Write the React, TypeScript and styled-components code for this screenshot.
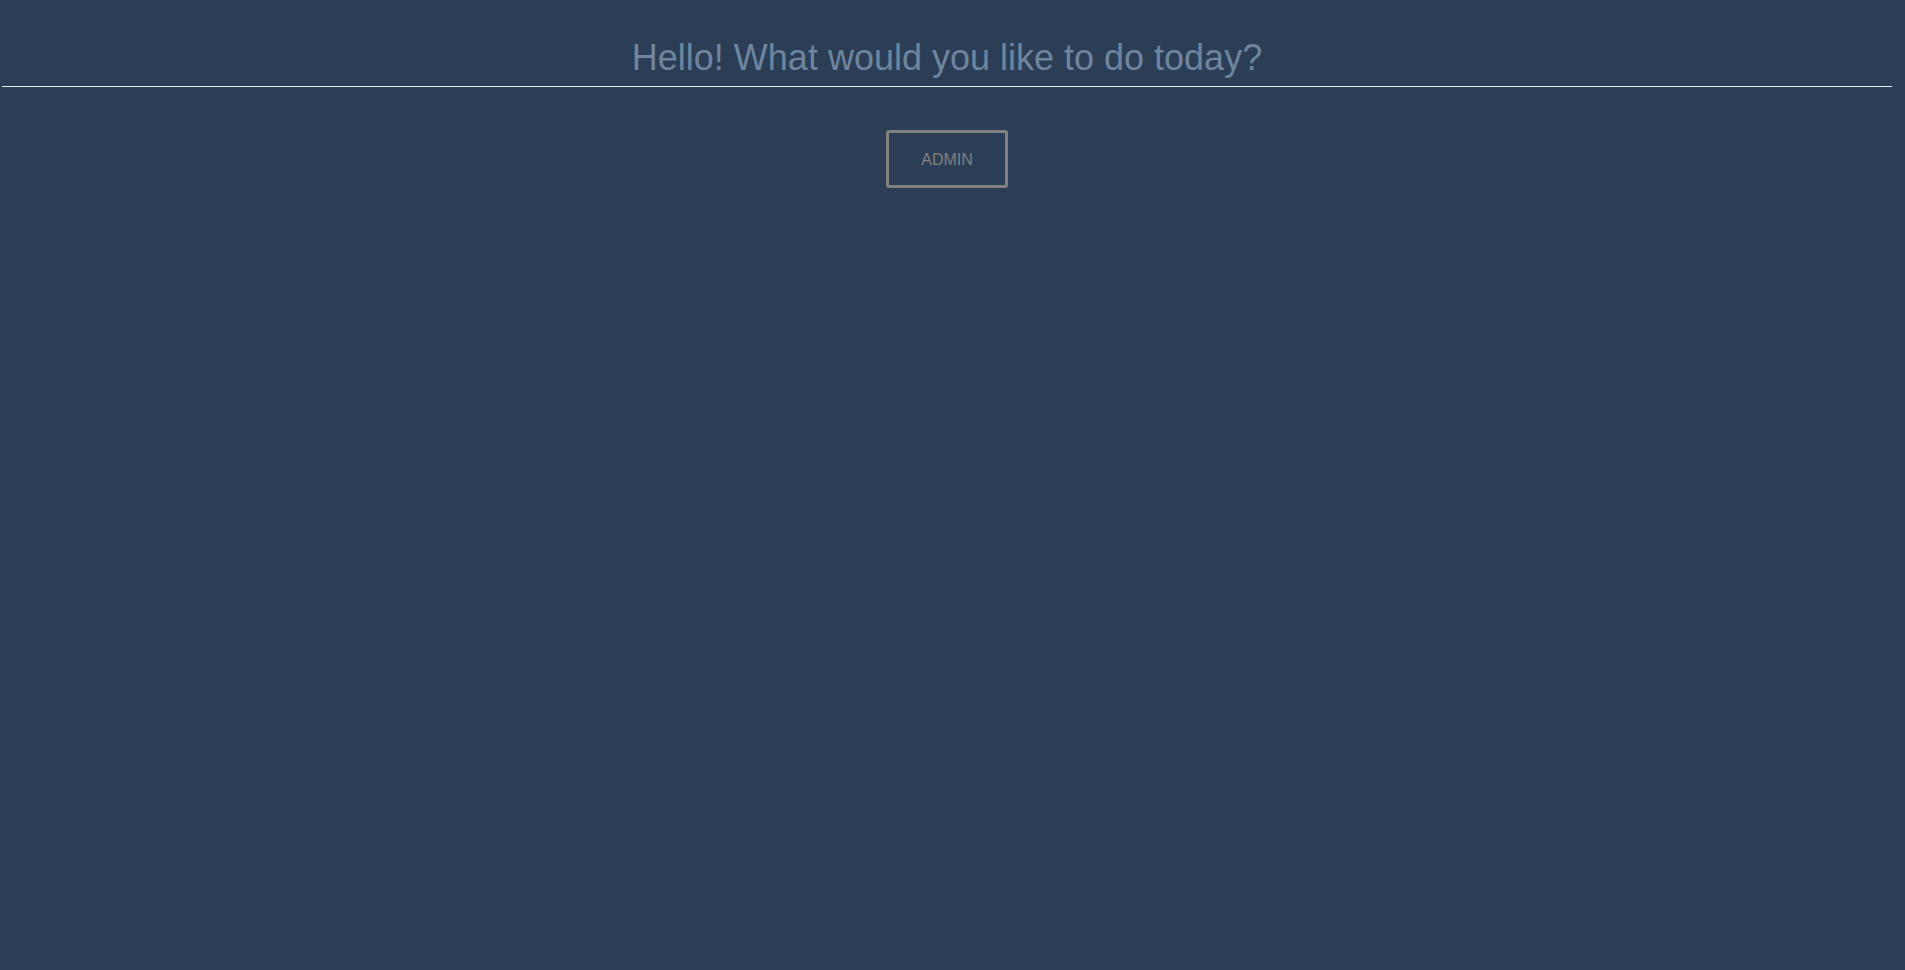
import styled, { createGlobalStyle } from "styled-components";

const GlobalStyle = createGlobalStyle`
  html, body {
    margin: 0;
    padding: 0;
    background: #2b3e55;
  }
  body {
    font-family: "Liberation Sans", Arial, sans-serif;
  }
`;

export default function App() {
  return (
    <>
      <GlobalStyle />
      <Page>
        <Header>
          <h1>Hello! What would you like to do today?</h1>
        </Header>
        <Actions>
          <MenuButton type="button">ADMIN</MenuButton>
        </Actions>
      </Page>
    </>
  );
}

const Page = styled.div`
  min-height: 100vh;
  padding: 0 13px 0 2px;
  box-sizing: border-box;
  background: #2b3e55;
  display: flex;
  flex-direction: column;
`;

const Header = styled.header`
  padding-top: 37px;
  padding-bottom: 8px;
  border-bottom: 1px solid #e8ecef;
  text-align: center;

  h1 {
    margin: 0;
    font-family: "Liberation Sans", Arial, sans-serif;
    font-size: 36px;
    font-weight: 400;
    line-height: 41px;
    color: #6d859e;
  }
`;

const Actions = styled.div`
  display: flex;
  justify-content: center;
  padding-top: 43px;
`;

const MenuButton = styled.button`
  width: 122px;
  height: 58px;
  box-sizing: border-box;
  padding: 2px 0 0;
  background: transparent;
  border: 3px solid #808080;
  border-radius: 3px;
  color: #808080;
  font-family: "Liberation Sans", Arial, sans-serif;
  font-size: 16px;
  cursor: pointer;
`;
